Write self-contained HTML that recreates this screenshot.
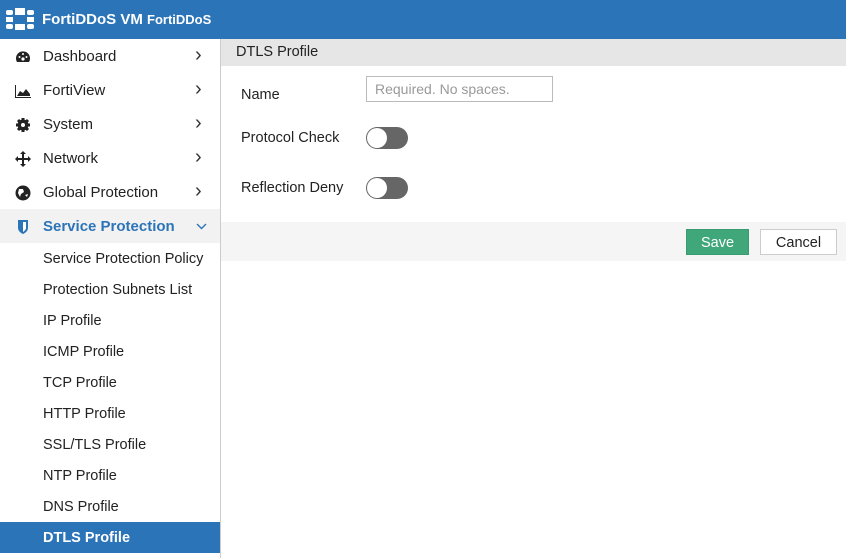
<!DOCTYPE html>
<html><head><style>
*{margin:0;padding:0;box-sizing:border-box}
body{width:846px;height:558px;background:#fff;font-family:"Liberation Sans",sans-serif;font-size:14px;color:#222;position:relative;overflow:hidden}
.hdr{position:absolute;left:0;top:0;width:846px;height:39px;background:#2c74b8;color:#fff;font-weight:bold}
.hdr .t{position:absolute;left:42px;top:11px;font-size:15px}
.hdr .t small{font-size:13px}
.side{position:absolute;left:0;top:39px;width:221px;height:519px;border-right:1px solid #ccc;background:#fff}
.mi{position:absolute;left:0;width:220px;height:34px;line-height:36px;padding-left:43px;font-size:15px}
.mi .ic{position:absolute;left:15px;top:10px;width:16px;height:16px}
.mi .ch{position:absolute;left:195px;top:-2px;font-size:20px;color:#333}
.si{position:absolute;left:0;width:220px;height:31px;line-height:32px;padding-left:43px;font-size:14.5px}
.title{position:absolute;left:221px;top:39px;width:625px;height:27px;background:#e6e6e6;padding-left:15px;line-height:27px;font-size:14.5px}
.lbl{position:absolute;left:241px;font-size:14.5px}
.inp{position:absolute;left:366px;top:76px;width:187px;height:26px;border:1px solid #bbb;color:#999;padding-left:8px;line-height:24px;font-size:14px}
.tg{position:absolute;left:366px;width:42px;height:22px;border-radius:11px;background:#666}
.tg:after{content:"";position:absolute;left:1px;top:1px;width:20px;height:20px;border-radius:50%;background:#fff}
.foot{position:absolute;left:221px;top:222px;width:625px;height:39px;background:#f5f5f5}
.btn{position:absolute;top:229px;height:26px;line-height:26px;text-align:center;font-size:14.5px}
</style></head><body>
<div class="hdr">
<svg style="position:absolute;left:6px;top:8px" width="28" height="22" viewBox="0 0 28 22" fill="#fff">
<rect x="0" y="2" width="7" height="5" rx="2"/><rect x="9" y="0" width="10" height="7"/><rect x="21" y="2" width="7" height="5" rx="2"/>
<rect x="0" y="9" width="7" height="5"/><rect x="21" y="9" width="7" height="5"/>
<rect x="0" y="16" width="7" height="5" rx="2"/><rect x="9" y="16" width="10" height="6"/><rect x="21" y="16" width="7" height="5" rx="2"/>
</svg>
<div class="t">FortiDDoS VM <small>FortiDDoS</small></div>
</div>
<div class="side">
<div class="mi" style="top:0">
<svg class="ic" viewBox="0 0 16 16"><path d="M2 13A7 7 0 1 1 14 13Z" fill="#222"/><circle cx="8" cy="10" r="1.6" fill="#fff"/><circle cx="4.5" cy="8" r="1" fill="#fff"/><circle cx="8" cy="5" r="1" fill="#fff"/><circle cx="11.5" cy="8" r="1" fill="#fff"/></svg>
Dashboard<span class="ch">›</span></div>
<div class="mi" style="top:34px">
<svg class="ic" viewBox="0 0 16 16"><path d="M0 2V15H16V14H1V2Z" fill="#222"/><path d="M2 13L5 8L8 10L11 6L15 11V13Z" fill="#222"/></svg>
FortiView<span class="ch">›</span></div>
<div class="mi" style="top:68px">
<svg class="ic" viewBox="0 0 16 16"><circle cx="8" cy="8" r="5.5" fill="#222"/><g stroke="#222" stroke-width="3"><path d="M8 1V15M1 8H15M3 3L13 13M13 3L3 13"/></g><circle cx="8" cy="8" r="2" fill="#fff"/></svg>
System<span class="ch">›</span></div>
<div class="mi" style="top:102px">
<svg class="ic" viewBox="0 0 16 16"><path d="M8 0L11 3H9V7H13V5L16 8L13 11V9H9V13H11L8 16L5 13H7V9H3V11L0 8L3 5V7H7V3H5Z" fill="#222"/></svg>
Network<span class="ch">›</span></div>
<div class="mi" style="top:136px">
<svg class="ic" viewBox="0 0 16 16"><circle cx="8" cy="8" r="7.5" fill="#222"/><path d="M4 4L8 4L9 7L6 9L5 12L3 8Z M10 10L13 9L12 12Z" fill="#fff"/></svg>
Global Protection<span class="ch">›</span></div>
<div class="mi" style="top:170px;background:#f2f2f2;color:#2c74b8;font-weight:bold">
<svg class="ic" viewBox="0 0 16 16"><path d="M3 1H13V9C13 13 8 15 8 15C8 15 3 13 3 9Z" fill="#2c74b8"/><path d="M8 3H11V9C11 11 8 13 8 13Z" fill="#fff"/></svg>
Service Protection<svg style="position:absolute;left:196px;top:14px" width="11" height="7" viewBox="0 0 11 7"><path d="M1 1L5.5 5.5L10 1" stroke="#2c74b8" stroke-width="1.4" fill="none"/></svg></div>
<div class="si" style="top:204px">Service Protection Policy</div>
<div class="si" style="top:235px">Protection Subnets List</div>
<div class="si" style="top:266px">IP Profile</div>
<div class="si" style="top:297px">ICMP Profile</div>
<div class="si" style="top:328px">TCP Profile</div>
<div class="si" style="top:359px">HTTP Profile</div>
<div class="si" style="top:390px">SSL/TLS Profile</div>
<div class="si" style="top:421px">NTP Profile</div>
<div class="si" style="top:452px">DNS Profile</div>
<div class="si" style="top:483px;background:#2c74b8;color:#fff;font-weight:bold">DTLS Profile</div>
</div>
<div class="title">DTLS Profile</div>
<div class="lbl" style="top:87px">Name</div>
<div class="inp">Required. No spaces.</div>
<div class="lbl" style="top:130px">Protocol Check</div>
<div class="tg" style="top:127px"></div>
<div class="lbl" style="top:180px">Reflection Deny</div>
<div class="tg" style="top:177px"></div>
<div class="foot"></div>
<div class="btn" style="left:686px;width:63px;background:#3fa77a;border:1px solid #3a9a70;color:#fff">Save</div>
<div class="btn" style="left:760px;width:77px;background:#fff;border:1px solid #ccc">Cancel</div>
</body></html>
